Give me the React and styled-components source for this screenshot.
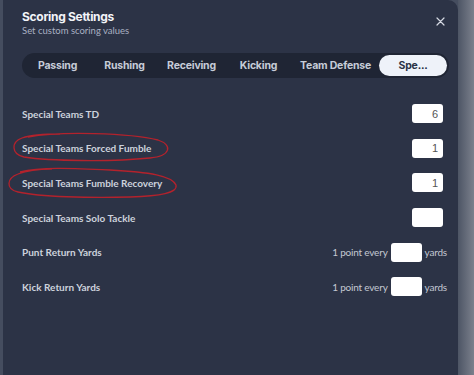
import React from "react";
import styled, { createGlobalStyle } from "styled-components";

const GlobalStyle = createGlobalStyle`
  html, body {
    margin: 0;
    padding: 0;
    width: 474px;
    height: 375px;
    overflow: hidden;
    background: #454d5f;
  }
`;

const tabs = ["Passing", "Rushing", "Receiving", "Kicking", "Team Defense", "Special Teams"];

const rows = [
  { label: "Special Teams TD", value: "6" },
  { label: "Special Teams Forced Fumble", value: "1" },
  { label: "Special Teams Fumble Recovery", value: "1" },
  { label: "Special Teams Solo Tackle", value: "" },
  { label: "Punt Return Yards", value: "", yards: true },
  { label: "Kick Return Yards", value: "", yards: true },
];

export default function App() {
  return (
    <Screen>
      <GlobalStyle />
      <Modal>
        <Header>
          <div>
            <Title>Scoring Settings</Title>
            <SubTitle>Set custom scoring values</SubTitle>
          </div>
          <Close aria-label="close">
            <svg width="9" height="9" viewBox="0 0 9 9">
              <path d="M1 1L8 8M8 1L1 8" stroke="#d5d9e2" strokeWidth="1.2" strokeLinecap="round" />
            </svg>
          </Close>
        </Header>
        <TabTrack>
          {tabs.map((t, i) => (
            <Tab key={t} active={i === tabs.length - 1}>
              {i === tabs.length - 1 ? "Spe..." : t}
            </Tab>
          ))}
        </TabTrack>
        <List>
          {rows.map((r) => (
            <Row key={r.label}>
              <Label>{r.label}</Label>
              {r.yards ? (
                <Yards>
                  <Small>1 point every</Small>
                  <Input defaultValue={r.value} />
                  <Small>yards</Small>
                </Yards>
              ) : (
                <Input defaultValue={r.value} />
              )}
            </Row>
          ))}
          {/* red hand-drawn marks, drawn in page coordinates */}
          <Scribble width="200" height="120" viewBox="0 100 200 120">
            <path
              d="M28 138 C 60 132, 130 134, 158 141 C 173 146, 171 157, 150 159 C 110 163, 50 162, 24 158 C 11 155, 11 143, 22 139 C 34 135, 50 135, 60 135"
              fill="none"
              stroke="#b3222c"
              strokeWidth="1.3"
            />
            <path
              d="M20 173 C 40 168, 70 169, 110 171 C 150 173, 172 177, 176 186 C 178 194, 160 197, 130 198 C 90 199, 40 198, 18 193 C 5 190, 7 179, 18 175 C 28 171, 40 170, 52 170"
              fill="none"
              stroke="#b3222c"
              strokeWidth="1.3"
            />
          </Scribble>
        </List>
      </Modal>
      <Shade />
    </Screen>
  );
}

const Screen = styled.div`
  display: flex;
  height: 375px;
  padding-left: 3px;
`;

const Modal = styled.div`
  width: 455px;
  height: 375px;
  background: #2c3346;
  border-radius: 0 10px 0 0;
  padding: 9px 16px 0 19px;
  box-sizing: border-box;
`;

const Shade = styled.div`
  flex: 1;
  background: linear-gradient(90deg, #4d5565 0%, #7b808c 100%);
`;

const Header = styled.div`
  display: flex;
  justify-content: space-between;
  align-items: flex-start;
`;

const Title = styled.h1`
  margin: 0;
  font-family: "Inter", "Open Sans", sans-serif;
  font-weight: 700;
  font-size: 12px;
  line-height: 16px;
  color: #f2f4f8;
  letter-spacing: -0.3px;
`;

const SubTitle = styled.p`
  margin: 0;
  font-family: "Lato", sans-serif;
  font-size: 9.5px;
  line-height: 12px;
  color: #a9b0c2;
`;

const Close = styled.button`
  border: none;
  background: none;
  padding: 0;
  margin: 8px -3px 0 0;
  display: flex;
`;

const TabTrack = styled.div`
  display: flex;
  align-items: center;
  margin-top: 16px;
  width: 427px;
  height: 25px;
  box-sizing: border-box;
  padding: 2px;
  background: #1f2534;
  border-radius: 13px;
`;

const Tab = styled.div`
  min-width: 67px;
  flex-shrink: 0;
  padding: 0 8px;
  box-sizing: border-box;
  height: 21px;
  display: flex;
  align-items: center;
  justify-content: center;
  font-family: "Inter", "Open Sans", sans-serif;
  font-weight: 700;
  font-size: 10.5px;
  letter-spacing: -0.2px;
  border-radius: 11px;
  color: ${(p) => (p.active ? "#2a3246" : "#c6ccd8")};
  background: ${(p) => (p.active ? "#eef2f9" : "transparent")};
  ${(p) => (p.active ? "margin-left: auto; width: 68px;" : "")}
`;

const List = styled.div`
  position: relative;
  margin-top: 26px;
  display: flex;
  flex-direction: column;
  gap: 15.7px;
`;

const Row = styled.div`
  display: flex;
  justify-content: space-between;
  align-items: center;
  height: 19px;
  width: 421px;
`;

const Label = styled.span`
  font-family: "Lato", sans-serif;
  font-weight: 700;
  font-size: 10px;
  color: #cdd2dc;
`;

const Yards = styled.div`
  display: flex;
  align-items: center;
  gap: 3px;
  margin-right: -4px;
`;

const Small = styled.span`
  font-family: "Lato", sans-serif;
  font-size: 10px;
  color: #c3c8d2;
  letter-spacing: -0.2px;
`;

const Input = styled.input`
  width: 31px;
  height: 19px;
  box-sizing: border-box;
  border: none;
  border-radius: 3px;
  background: #ffffff;
  padding: 0 5px;
  text-align: right;
  font-family: "Liberation Sans", Arial, sans-serif;
  font-size: 11px;
  color: #555;
  outline: none;
`;

const Scribble = styled.svg`
  position: absolute;
  left: -22px;
  top: -5px;
  pointer-events: none;
`;
